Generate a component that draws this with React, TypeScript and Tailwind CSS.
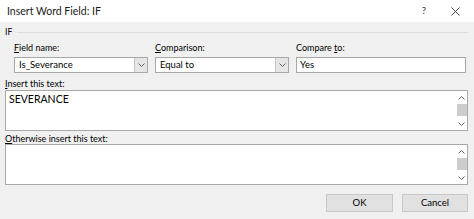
import React from "react";

const Chevron = ({ up = false }: { up?: boolean }) => (
  <svg width="7" height="4" viewBox="0 0 7 4" className="block">
    <polyline
      points={up ? "0.5,3.5 3.5,0.5 6.5,3.5" : "0.5,0.5 3.5,3.5 6.5,0.5"}
      fill="none"
      stroke="#606060"
      strokeWidth="1"
    />
  </svg>
);

const Combo = ({ value, w }: { value: string; w: string }) => (
  <div className={`${w} h-[16px] bg-white border border-[#a8a8a8] flex items-stretch`}>
    <div className="flex-1 flex items-center pl-[4px] text-[9.5px] text-black leading-none">{value}</div>
    <div className="w-[13px] bg-[#e6e6e6] border-l border-[#c4c4c4] flex items-center justify-center">
      <Chevron />
    </div>
  </div>
);

const TextArea = ({ text, h }: { text?: string; h: string }) => (
  <div className={`${h} bg-white border border-[#a8a8a8] flex`}>
    <div className="flex-1 pl-[3px] pt-[2px] text-[10.5px] leading-[13px] text-black">{text}</div>
    <div className="w-[11px] flex flex-col items-center">
      <div className="h-[13px] flex items-center justify-center">
        <Chevron up />
      </div>
      <div className="w-[10px] h-[12px] bg-[#cdcdcd] ml-[1px]" />
      <div className="flex-1" />
      <div className="h-[12px] flex items-center justify-center">
        <Chevron />
      </div>
    </div>
  </div>
);

export default function App() {
  return (
    <div
      className="w-[474px] h-[219px] bg-[#f0f0f0] overflow-hidden text-black"
      style={{ fontFamily: 'Lato, "Noto Sans", sans-serif' }}
    >
      <div className="h-[22px] bg-white flex items-center justify-between pl-[7px] pr-[14px]">
        <span className="text-[10.5px] leading-none text-[#1a1a1a]">Insert Word Field: IF</span>
        <div className="flex items-center gap-[25px]">
          <span className="text-[9.5px] leading-none text-[#333]">?</span>
          <svg width="9" height="9" viewBox="0 0 9 9">
            <path d="M0.5,0.5 L8.5,8.5 M8.5,0.5 L0.5,8.5" stroke="#333" strokeWidth="0.9" fill="none" />
          </svg>
        </div>
      </div>
      <div className="pl-[5px] pr-[6px]">
        <div className="flex items-center h-[12px] mt-[4px]">
          <span className="text-[8.5px] leading-none">IF</span>
          <div className="flex-1 h-px bg-[#dcdcdc] ml-[5px]" />
        </div>
        <div className="flex pl-[9px] gap-[7px] mt-[4px]">
          <div className="flex flex-col gap-[4px]">
            <span className="text-[9px] leading-[11px]"><u>F</u>ield name:</span>
            <Combo value="Is_Severance" w="w-[134px]" />
          </div>
          <div className="flex flex-col gap-[4px]">
            <span className="text-[9px] leading-[11px]"><u>C</u>omparison:</span>
            <Combo value="Equal to" w="w-[134px]" />
          </div>
          <div className="flex flex-col gap-[4px]">
            <span className="text-[9px] leading-[11px]">Compare <u>t</u>o:</span>
            <div className="w-[170px] h-[16px] bg-white border border-[#a8a8a8] flex items-center pl-[3px] text-[9.5px] leading-none">
              Yes
            </div>
          </div>
        </div>
        <div className="mt-[5px] text-[9px] leading-[12px]"><u>I</u>nsert this text:</div>
        <TextArea text="SEVERANCE" h="h-[41px]" />
        <div className="mt-[2px] text-[9px] leading-[11px]"><u>O</u>therwise insert this text:</div>
        <TextArea h="h-[41px]" />
        <div className="flex justify-end gap-[9px] mt-[9px]">
          <div className="w-[67px] h-[18px] bg-[#e1e1e1] border border-[#c8c8c8] flex items-center justify-center text-[9.5px] leading-none">
            OK
          </div>
          <div className="w-[66px] h-[18px] bg-[#e1e1e1] border border-[#c8c8c8] flex items-center justify-center text-[9.5px] leading-none">
            Cancel
          </div>
        </div>
      </div>
    </div>
  );
}
